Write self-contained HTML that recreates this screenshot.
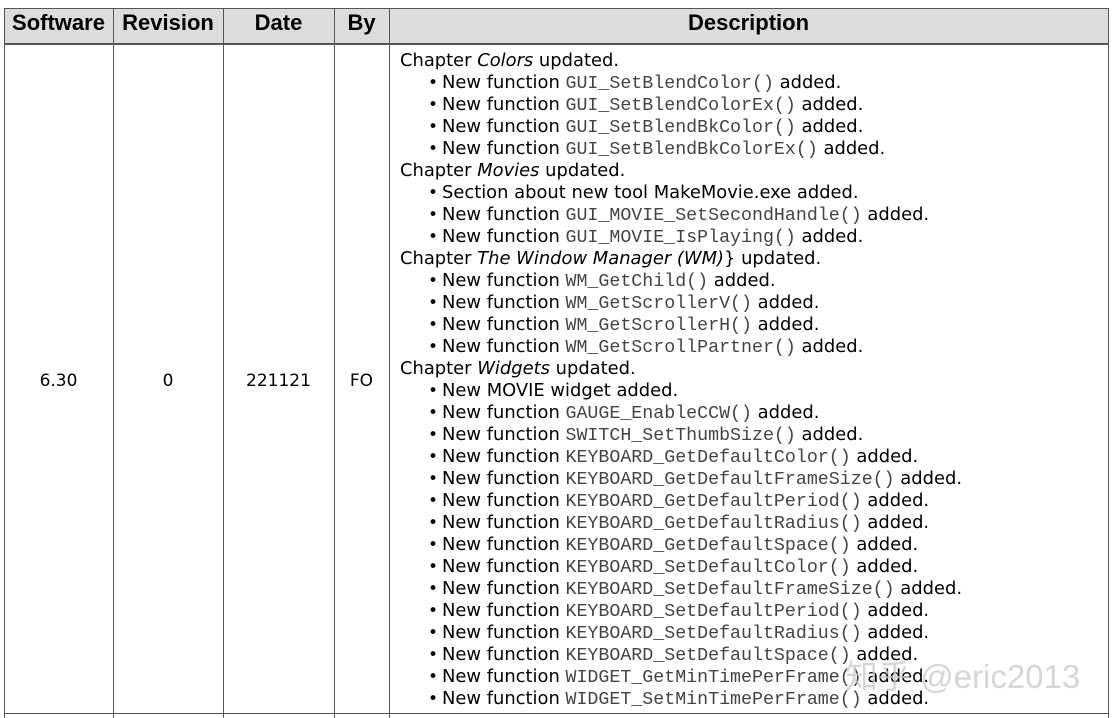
<!DOCTYPE html>
<html><head><meta charset="utf-8"><style>
body{margin:0;width:1113px;height:718px;background:#fff;overflow:hidden;position:relative;font-family:"DejaVu Sans","Liberation Sans",sans-serif;color:#000}
.v{position:absolute;top:8px;height:710px;width:1px;background:#555}
.h{position:absolute;left:4px;width:1105px;height:1px;background:#555}
.hd{position:absolute;top:10px;height:35px;line-height:30px;text-align:center;font:bold 22px "Liberation Sans",sans-serif}
.c{position:absolute;top:370px;line-height:22px;text-align:center;font-size:17px}
#d{position:absolute;left:400px;top:50px;font-size:17.9px;line-height:22px;white-space:pre}
#d div{height:22px;line-height:22px}
#d div.b{padding-left:30px;position:relative}
#d div.b:before{content:"•";position:absolute;left:28px;font-size:17px}
#d div.b span.t{padding-left:12px}
code{font-family:"Liberation Mono",monospace;font-size:18.3px;color:#444;line-height:1}
#wm{position:absolute;left:845px;top:650px;font:33px "Liberation Sans","Noto Sans CJK SC",sans-serif;color:rgba(200,200,200,.75);white-space:nowrap}
</style></head><body>
<div style="position:absolute;left:4px;top:8px;width:1105px;height:35px;background:#dcdcdc"></div>
<div class="h" style="top:8px"></div><div class="h" style="top:43px;height:2px"></div><div class="h" style="top:713px"></div>
<div class="v" style="left:4px"></div><div class="v" style="left:113px"></div><div class="v" style="left:223px"></div><div class="v" style="left:334px"></div><div class="v" style="left:389px"></div><div class="v" style="left:1108px"></div>
<div class="hd" style="left:4px;width:109px">Software</div>
<div class="hd" style="left:113px;width:110px">Revision</div>
<div class="hd" style="left:223px;width:111px">Date</div>
<div class="hd" style="left:334px;width:55px">By</div>
<div class="hd" style="left:389px;width:719px">Description</div>
<div class="c" style="left:4px;width:109px">6.30</div>
<div class="c" style="left:113px;width:110px">0</div>
<div class="c" style="left:223px;width:111px">221121</div>
<div class="c" style="left:334px;width:55px">FO</div>
<div id="d"><div>Chapter <i>Colors</i> updated.</div><div class="b"><span class="t">New function <code>GUI_SetBlendColor()</code> added.</span></div><div class="b"><span class="t">New function <code>GUI_SetBlendColorEx()</code> added.</span></div><div class="b"><span class="t">New function <code>GUI_SetBlendBkColor()</code> added.</span></div><div class="b"><span class="t">New function <code>GUI_SetBlendBkColorEx()</code> added.</span></div><div>Chapter <i>Movies</i> updated.</div><div class="b"><span class="t">Section about new tool MakeMovie.exe added.</span></div><div class="b"><span class="t">New function <code>GUI_MOVIE_SetSecondHandle()</code> added.</span></div><div class="b"><span class="t">New function <code>GUI_MOVIE_IsPlaying()</code> added.</span></div><div>Chapter <i>The Window Manager (WM)</i>} updated.</div><div class="b"><span class="t">New function <code>WM_GetChild()</code> added.</span></div><div class="b"><span class="t">New function <code>WM_GetScrollerV()</code> added.</span></div><div class="b"><span class="t">New function <code>WM_GetScrollerH()</code> added.</span></div><div class="b"><span class="t">New function <code>WM_GetScrollPartner()</code> added.</span></div><div>Chapter <i>Widgets</i> updated.</div><div class="b"><span class="t">New MOVIE widget added.</span></div><div class="b"><span class="t">New function <code>GAUGE_EnableCCW()</code> added.</span></div><div class="b"><span class="t">New function <code>SWITCH_SetThumbSize()</code> added.</span></div><div class="b"><span class="t">New function <code>KEYBOARD_GetDefaultColor()</code> added.</span></div><div class="b"><span class="t">New function <code>KEYBOARD_GetDefaultFrameSize()</code> added.</span></div><div class="b"><span class="t">New function <code>KEYBOARD_GetDefaultPeriod()</code> added.</span></div><div class="b"><span class="t">New function <code>KEYBOARD_GetDefaultRadius()</code> added.</span></div><div class="b"><span class="t">New function <code>KEYBOARD_GetDefaultSpace()</code> added.</span></div><div class="b"><span class="t">New function <code>KEYBOARD_SetDefaultColor()</code> added.</span></div><div class="b"><span class="t">New function <code>KEYBOARD_SetDefaultFrameSize()</code> added.</span></div><div class="b"><span class="t">New function <code>KEYBOARD_SetDefaultPeriod()</code> added.</span></div><div class="b"><span class="t">New function <code>KEYBOARD_SetDefaultRadius()</code> added.</span></div><div class="b"><span class="t">New function <code>KEYBOARD_SetDefaultSpace()</code> added.</span></div><div class="b"><span class="t">New function <code>WIDGET_GetMinTimePerFrame()</code> added.</span></div><div class="b"><span class="t">New function <code>WIDGET_SetMinTimePerFrame()</code> added.</span></div></div>
<div id="wm">知乎 @eric2013</div>
</body></html>
